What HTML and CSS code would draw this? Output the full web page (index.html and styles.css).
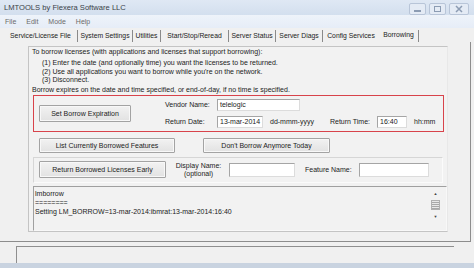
FILE: index.html
```
<!doctype html>
<html>
	<head>
		<meta charset="utf-8">
		<title>LMTOOLS</title>
		<link rel="stylesheet" href="styles.css">
	</head>
	<body>
		<div class="window">
			<div class="titlebar">
				<span class="title">LMTOOLS by Flexera Software LLC</span>
				<div class="controls">
					<span class="ctl"><svg width="15" height="10" viewBox="0 0 15 10"><rect x="4" y="6" width="7" height="2" fill="#8c9cb3"/></svg></span>
					<span class="ctl"><svg width="15" height="10" viewBox="0 0 15 10"><rect x="4.5" y="2.5" width="6" height="5" fill="none" stroke="#8c9cb3"/></svg></span>
					<span class="ctl close"><svg width="18" height="10" viewBox="0 0 18 10"><path d="M6 2 L12 8 M12 2 L6 8" stroke="#8c9cb3" stroke-width="1.5"/></svg></span>
				</div>
			</div>
			<div class="menubar">
				<span>File</span><span>Edit</span><span>Mode</span><span>Help</span>
			</div>
			<div class="tabs">
				<span class="tab t1">Service/License File</span>
				<span class="tab t2">System Settings</span>
				<span class="tab t3">Utilities</span>
				<span class="tab t4">Start/Stop/Reread</span>
				<span class="tab t5">Server Status</span>
				<span class="tab t6">Server Diags</span>
				<span class="tab t7">Config Services</span>
				<span class="tab active">Borrowing</span>
			</div>
			<div class="tabctl">
				<div class="page">
					<div class="intro">
						<div class="lead">To borrow licenses (with applications and licenses that support borrowing):</div>
						<div class="step">(1) Enter the date (and optionally time) you want the licenses to be returned.</div>
						<div class="step">(2) Use all applications you want to borrow while you're on the network.</div>
						<div class="step">(3) Disconnect.</div>
						<div class="expires">Borrow expires on the date and time specified, or end-of-day, if no time is specified.</div>
					</div>
					<div class="redgroup">
						<button class="btn expire">Set Borrow Expiration</button>
						<div class="fields">
							<div class="frow">
								<span class="lbl">Vendor Name:</span>
								<span class="input vendor">telelogic</span>
							</div>
							<div class="frow">
								<span class="lbl">Return Date:</span>
								<span class="input date">13-mar-2014</span>
								<span class="hint">dd-mmm-yyyy</span>
								<span class="lbl time">Return Time:</span>
								<span class="input tm">16:40</span>
								<span class="hint">hh:mm</span>
							</div>
						</div>
					</div>
					<div class="btnrow">
						<button class="btn list">List Currently Borrowed Features</button>
						<button class="btn dont">Don't Borrow Anymore Today</button>
					</div>
					<div class="returngroup">
						<button class="btn early">Return Borrowed Licenses Early</button>
						<span class="lbl2">Display Name:<br>(optional)</span>
						<span class="input disp"></span>
						<span class="lbl feat">Feature Name:</span>
						<span class="input featin"></span>
					</div>
					<div class="output">
						<div class="log">
							<div>lmborrow</div>
							<div>========</div>
							<div>Setting LM_BORROW=13-mar-2014:ibmrat:13-mar-2014:16:40</div>
						</div>
						<div class="scroll">
							<span class="arrow">&#x25B2;</span>
							<span class="thumb"></span>
							<span class="arrow">&#x25BC;</span>
						</div>
					</div>
				</div>
			</div>
			<div class="status">
				<div class="statusfield"></div>
			</div>
			<div class="bottomedge"></div>
		</div>
	</body>
</html>
```
FILE: styles.css
```
html, body {
    margin: 0;
    padding: 0;
}
body {
    width: 474px;
    height: 268px;
    overflow: hidden;
    background: #f0f0f0;
    font-family: "Liberation Sans", Arial, sans-serif;
    font-size: 7px;
    color: #222;
}
.window {
    display: flex;
    flex-direction: column;
    height: 268px;
}
.titlebar {
    height: 15px;
    display: flex;
    align-items: center;
    justify-content: space-between;
    padding-left: 4px;
    background: linear-gradient(#dfe8f4, #d3dfee);
}
.title {
    font-size: 7.6px;
    color: #3a3f48;
}
.controls {
    display: flex;
    gap: 3px;
    padding-right: 5px;
    padding-top: 2px;
}
.ctl {
    display: flex;
    width: 15px;
    height: 10px;
    border: 1px solid #b8c5d8;
    border-radius: 2px;
    background: #e4ebf5;
}
.ctl.close {
    width: 18px;
}
.menubar {
    height: 13px;
    display: flex;
    align-items: center;
    gap: 10px;
    padding-left: 5px;
    font-size: 7px;
    color: #6b6b6b;
    background: linear-gradient(#eef3fa, #e6edf7);
}
.tabs {
    height: 14px;
    display: flex;
    align-items: flex-end;
    padding-left: 4px;
}
.tab {
    flex: none;
    height: 12px;
    line-height: 11px;
    box-sizing: border-box;
    border-right: 1px solid #8a8a8a;
    font-size: 6.8px;
    text-align: center;
    white-space: nowrap;
}
.t1 { width: 74px; }
.t2 { width: 55px; }
.t3 { width: 28px; }
.t4 { width: 68px; }
.t5 { width: 47px; }
.t6 { width: 47px; }
.t7 { width: 56px; border-right: none; }
.tab.active {
    width: 40px;
    line-height: 9px;
}
.tabctl {
    width: 471px;
    height: 200px;
    box-sizing: border-box;
    border-right: 1px solid #8d8d8d;
    border-bottom: 1px solid #8d8d8d;
    padding: 4px 0 0 28px;
}
.page {
    width: 420px;
    height: 186px;
    box-sizing: border-box;
    border: 1px solid #c4c4c4;
    border-right-color: #e8e8e8;
    background: #f2f2f2;
}
.intro {
    padding: 1px 3px 0;
    line-height: 8.8px;
}
.lead {
    margin-bottom: 2px;
}
.expires {
    margin-top: 1px;
}
.step {
    padding-left: 10px;
}
.redgroup {
    margin: 0 3px 0 4px;
    height: 37px;
    box-sizing: border-box;
    border: 1px solid #d8434b;
    display: flex;
    align-items: center;
    padding-left: 5px;
}
.btn {
    font: inherit;
    color: #222;
    border: 1px solid #a3a3a3;
    border-radius: 1px;
    background: linear-gradient(#f2f2f2, #e2e2e2);
    padding: 0;
    box-shadow: inset 0 0 0 1px #f8f8f8;
}
.expire {
    width: 92px;
    height: 17px;
}
.fields {
    margin-left: 34px;
    display: flex;
    flex-direction: column;
    gap: 5px;
}
.frow {
    display: flex;
    align-items: center;
}
.lbl {
    flex: none;
    width: 52px;
}
.input {
    flex: none;
    height: 12px;
    box-sizing: border-box;
    background: #fff;
    border: 1px solid #a5a5a5;
    border-right-color: #dcdcdc;
    border-bottom-color: #dcdcdc;
    padding-left: 2px;
    line-height: 10px;
}
.vendor {
    width: 83px;
}
.date {
    width: 46px;
}
.hint {
    flex: none;
    margin-left: 7px;
}
.lbl.time {
    width: auto;
    margin-left: 16px;
    margin-right: 7px;
}
.tm {
    width: 30px;
}
.btnrow {
    display: flex;
    gap: 28px;
    padding: 6px 0 0 10px;
}
.list {
    width: 136px;
    height: 15px;
}
.dont {
    width: 127px;
    height: 15px;
}
.returngroup {
    margin: 4px 4px 0 4px;
    height: 26px;
    box-sizing: border-box;
    border: 1px solid #d6d6d6;
    border-right-color: #fbfbfb;
    border-bottom-color: #fbfbfb;
    display: flex;
    align-items: center;
    padding-left: 5px;
}
.early {
    width: 127px;
    height: 17px;
}
.lbl2 {
    width: 53px;
    text-align: center;
    line-height: 8px;
    margin-left: 6px;
}
.disp {
    width: 66px;
    height: 14px;
    margin-left: 4px;
}
.feat {
    width: auto;
    margin-left: 10px;
    margin-right: 7px;
}
.featin {
    width: 70px;
    height: 14px;
}
.output {
    margin: 3px 0 0 4px;
    height: 45px;
    box-sizing: border-box;
    border: 1px solid #a0a0a0;
    border-right-color: #f8f8f8;
    border-bottom-color: #f8f8f8;
    display: flex;
    justify-content: space-between;
}
.log {
    padding: 2px 0 0 1px;
    line-height: 9px;
}
.scroll {
    width: 9px;
    margin-right: 6px;
    display: flex;
    flex-direction: column;
    align-items: center;
    padding-top: 4px;
    font-size: 4px;
    color: #444;
    gap: 4px;
}
.arrow {
    line-height: 5px;
    height: 5px;
}
.thumb {
    width: 7px;
    height: 8px;
    border: 1px solid #b0b0b0;
    background: repeating-linear-gradient(#e8e8e8 0 1px, #a8a8a8 1px 2px);
}
.status {
    height: 21px;
    padding: 4px 0 0 16px;
    box-sizing: border-box;
}
.statusfield {
    width: 438px;
    height: 17px;
    box-sizing: border-box;
    border-top: 1px solid #8f8f8f;
    border-left: 1px solid #8f8f8f;
}
.bottomedge {
    flex: 1;
    background: #c9d3e0;
}
```
